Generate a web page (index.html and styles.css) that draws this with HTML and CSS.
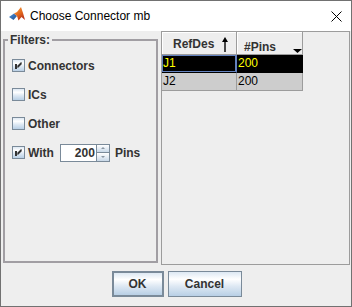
FILE: index.html
```html
<!DOCTYPE html>
<html>
<head>
<meta charset="utf-8">
<link rel="stylesheet" href="styles.css">
</head>
<body>
<div class="window">
  <div class="titlebar">
    <svg class="appicon" width="16" height="16" viewBox="0 0 16 16">
      <defs>
        <linearGradient id="peak" x1="0" y1="0" x2="0.6" y2="1">
          <stop offset="0" stop-color="#f7a23c"/>
          <stop offset="0.6" stop-color="#e2661c"/>
          <stop offset="1" stop-color="#b8321a"/>
        </linearGradient>
        <linearGradient id="base" x1="0" y1="0" x2="1" y2="1">
          <stop offset="0" stop-color="#4d8fd6"/>
          <stop offset="1" stop-color="#1d4f93"/>
        </linearGradient>
      </defs>
      <polygon points="0,10 5,6.5 8,9 4.5,13" fill="url(#base)"/>
      <polygon points="5,6.5 8,5 12,0 14,6 16,13 12.5,10 9.5,13.5 8,9" fill="url(#peak)"/>
    </svg>
    <span class="title">Choose Connector mb</span>
    <svg class="close" width="11" height="11" viewBox="0 0 11 11">
      <path d="M0.5 0.5L10.5 10.5M10.5 0.5L0.5 10.5" stroke="#000" stroke-width="1"/>
    </svg>
  </div>
  <div class="content">
    <div class="main">
      <div class="filters">
        <span class="legend">Filters:</span>
        <div class="row">
          <span class="cb"><svg width="11" height="11" viewBox="0 0 11 11"><rect x="2" y="4" width="2" height="5" fill="#333"/><path d="M8.5 2.5L4.5 6.5M8.5 3.5L4.5 7.5" stroke="#333" stroke-width="1.2"/></svg></span>
          <span class="lbl">Connectors</span>
        </div>
        <div class="row">
          <span class="cb"></span>
          <span class="lbl">ICs</span>
        </div>
        <div class="row">
          <span class="cb"></span>
          <span class="lbl">Other</span>
        </div>
        <div class="row">
          <span class="cb"><svg width="11" height="11" viewBox="0 0 11 11"><rect x="2" y="4" width="2" height="5" fill="#333"/><path d="M8.5 2.5L4.5 6.5M8.5 3.5L4.5 7.5" stroke="#333" stroke-width="1.2"/></svg></span>
          <span class="lbl">With</span>
          <div class="spinner">
            <span class="field">200</span>
            <span class="spin">
              <span class="spinbtn"><span class="arrow-up"></span></span>
              <span class="spinbtn"><span class="arrow-down"></span></span>
            </span>
          </div>
          <span class="lbl pins">Pins</span>
        </div>
      </div>
      <div class="tablepane">
        <div class="thead">
          <div class="th th1">
            <span class="thtext">RefDes</span>
            <svg class="uparrow" width="6" height="15" viewBox="0 0 6 15">
              <polygon points="0,5 3,0 6,5" fill="#000"/>
              <rect x="2.3" y="3" width="1.4" height="12" fill="#000"/>
            </svg>
          </div>
          <div class="th th2">
            <span class="thtext low">#Pins</span>
            <svg class="downtri" width="9" height="4" viewBox="0 0 9 4">
              <polygon points="0,0 9,0 4.5,4" fill="#000"/>
            </svg>
          </div>
        </div>
        <div class="tr sel">
          <div class="td td1 focus">J1</div>
          <div class="td td2">200</div>
        </div>
        <div class="tr">
          <div class="td td1">J2</div>
          <div class="td td2">200</div>
        </div>
      </div>
    </div>
    <div class="buttons">
      <button class="btn default">OK</button>
      <button class="btn cancel">Cancel</button>
    </div>
  </div>
</div>
</body>
</html>
```
FILE: styles.css
```css
html, body {
  margin: 0;
  padding: 0;
}
body {
  width: 352px;
  height: 307px;
  overflow: hidden;
  font-family: "Liberation Sans", Arial, sans-serif;
  background: #eeeeee;
}
.window {
  box-sizing: border-box;
  width: 352px;
  height: 307px;
  border: 1px solid #717171;
  display: flex;
  flex-direction: column;
  background: #eeeeee;
}
.titlebar {
  flex: none;
  height: 30px;
  background: #ffffff;
  display: flex;
  align-items: center;
}
.appicon {
  margin-left: 8px;
  margin-top: -2px;
  flex: none;
}
.title {
  margin-left: 5px;
  font-size: 12px;
  color: #000;
  line-height: 14px;
}
.close {
  margin-left: auto;
  margin-right: 9px;
  flex: none;
}
.content {
  flex: 1;
  display: flex;
  flex-direction: column;
  padding: 0 1px 0 2px;
}
.main {
  display: flex;
  gap: 3px;
  height: 234px;
  flex: none;
}
.filters {
  position: relative;
  box-sizing: border-box;
  width: 155px;
  height: 224px;
  margin-top: 8px;
  border: 2px solid #a19ea3;
  padding: 10px 0 0 7px;
}
.legend {
  position: absolute;
  left: 3px;
  top: -8px;
  padding: 0 2px;
  background: #eeeeee;
  font-size: 12px;
  font-weight: bold;
  line-height: 14px;
  color: #333;
}
.row {
  display: flex;
  align-items: center;
  height: 29px;
}
.cb {
  box-sizing: border-box;
  width: 13px;
  height: 13px;
  border: 1px solid #7a8a99;
  background: linear-gradient(to bottom, #dde8f3 0%, #ffffff 30%, #dde8f3 60%, #b8cfe5 100%);
  margin-right: 3px;
  display: flex;
  flex: none;
}
.lbl {
  font-size: 12px;
  font-weight: bold;
  color: #333;
  line-height: 14px;
}
.spinner {
  display: flex;
  margin-left: 6px;
  height: 18px;
}
.field {
  box-sizing: border-box;
  width: 36px;
  height: 18px;
  border: 1px solid #7a8a99;
  border-right: none;
  background: #ffffff;
  font-size: 12px;
  font-weight: bold;
  color: #333;
  text-align: right;
  padding-right: 1px;
  line-height: 16px;
}
.spin {
  display: flex;
  flex-direction: column;
  width: 14px;
}
.spinbtn {
  box-sizing: border-box;
  height: 9px;
  border: 1px solid #7a8a99;
  background: linear-gradient(to bottom, #ffffff, #c8d8e8);
  display: flex;
  align-items: center;
  justify-content: center;
}
.spinbtn + .spinbtn {
  border-top: none;
}
.arrow-up {
  width: 0;
  height: 0;
  border-left: 2px solid transparent;
  border-right: 2px solid transparent;
  border-bottom: 2px solid #8a96a2;
}
.arrow-down {
  width: 0;
  height: 0;
  border-left: 2px solid transparent;
  border-right: 2px solid transparent;
  border-top: 2px solid #8a96a2;
}
.pins {
  margin-left: 5px;
}
.tablepane {
  box-sizing: border-box;
  width: 189px;
  height: 234px;
  border: 1px solid #9c9c9c;
  background: #eeeeee;
}
.thead {
  display: flex;
  height: 23px;
}
.th {
  box-sizing: border-box;
  height: 23px;
  display: flex;
  align-items: flex-start;
  border-right: 1px solid #9c9c9c;
  border-bottom: 1px solid #9c9c9c;
  background: #eeeeee;
  box-shadow: inset 1px 1px 0 #ffffff;
  font-size: 12px;
  font-weight: bold;
  color: #333;
  line-height: 14px;
}
.th1 {
  width: 75px;
  padding: 5px 0 0 11px;
}
.th2 {
  width: 66px;
  padding: 8px 0 0 7px;
}
.uparrow {
  margin-left: 8px;
  margin-top: 0;
}
.downtri {
  margin-left: auto;
  margin-top: 9px;
}
.tr {
  display: flex;
  height: 18px;
}
.td {
  box-sizing: border-box;
  height: 18px;
  font-size: 12px;
  line-height: 17px;
  padding-left: 1px;
  color: #000;
  background: #cdcdcd;
  border-right: 1px solid #9c9c9c;
  border-bottom: 1px solid #9c9c9c;
}
.td1 {
  width: 75px;
}
.td2 {
  width: 66px;
}
.sel .td {
  background: #000000;
  color: #ffff00;
  border-color: #000000;
}
.sel .focus {
  box-shadow: inset 0 0 0 1px #6382bf;
  border-right-color: #6382bf;
}
.buttons {
  display: flex;
  justify-content: center;
  gap: 4px;
  margin-top: 6px;
}
.btn {
  box-sizing: border-box;
  height: 26px;
  margin: 0;
  padding: 0;
  font-family: "Liberation Sans", Arial, sans-serif;
  font-size: 12px;
  font-weight: bold;
  color: #333;
  background: linear-gradient(to bottom, #dde8f3 0%, #ffffff 30%, #dde8f3 60%, #b8cfe5 100%);
  border: 1px solid #7a8a99;
}
.default {
  width: 52px;
  border-width: 2px;
}
.cancel {
  width: 74px;
}
```
